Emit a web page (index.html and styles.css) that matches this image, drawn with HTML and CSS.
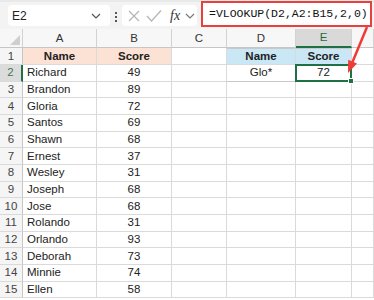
FILE: index.html
```html
<!DOCTYPE html>
<html>
<head>
    <title>VLOOKUP wildcard</title>
    <link rel="stylesheet" href="styles.css">
</head>
<body>
    <div class="topbar">
        <div class="namebox">
            <span>E2</span>
            <svg width="10" height="6" viewBox="0 0 10 6"><path d="M1 1 L5 5 L9 1" fill="none" stroke="#555" stroke-width="1.2"/></svg>
        </div>
        <div class="dots"><i></i><i></i><i></i></div>
        <div class="fxbox">
            <svg width="14" height="14" viewBox="0 0 14 14"><path d="M2 2 L12 12 M12 2 L2 12" stroke="#b5b5b5" stroke-width="1.2"/></svg>
            <svg width="16" height="14" viewBox="0 0 16 14"><path d="M1 7 L5.5 12 L15 1.5" fill="none" stroke="#b5b5b5" stroke-width="1.2"/></svg>
            <span class="fx">fx</span>
            <svg width="10" height="6" viewBox="0 0 10 6"><path d="M1 1 L5 5 L9 1" fill="none" stroke="#777" stroke-width="1.2"/></svg>
        </div>
        <div class="formula">=VLOOKUP(D2,A2:B15,2,0)</div>
    </div>

    <table class="sheet">
        <colgroup>
            <col class="c-row"><col class="c-a"><col class="c-b"><col class="c-c"><col class="c-d"><col class="c-e"><col class="c-f">
        </colgroup>
        <tr class="colhead">
            <td class="corner"><span class="tri"></span></td>
            <td>A</td><td>B</td><td>C</td><td>D</td><td class="active">E</td><td></td>
        </tr>
        <tr>
            <td class="rh">1</td>
            <td class="hd peach">Name</td><td class="hd peach">Score</td><td></td>
            <td class="hd blue">Name</td><td class="hd blue">Score</td><td></td>
        </tr>
        <tr>
            <td class="rh active">2</td>
            <td>Richard</td><td class="num">49</td><td></td>
            <td class="num lk">Glo*</td><td class="num lk sel">72<span class="handle"></span></td><td></td>
        </tr>
        <tr><td class="rh">3</td><td>Brandon</td><td class="num">89</td><td></td><td></td><td></td><td></td></tr>
        <tr><td class="rh">4</td><td>Gloria</td><td class="num">72</td><td></td><td></td><td></td><td></td></tr>
        <tr><td class="rh">5</td><td>Santos</td><td class="num">69</td><td></td><td></td><td></td><td></td></tr>
        <tr><td class="rh">6</td><td>Shawn</td><td class="num">68</td><td></td><td></td><td></td><td></td></tr>
        <tr><td class="rh">7</td><td>Ernest</td><td class="num">37</td><td></td><td></td><td></td><td></td></tr>
        <tr><td class="rh">8</td><td>Wesley</td><td class="num">31</td><td></td><td></td><td></td><td></td></tr>
        <tr><td class="rh">9</td><td>Joseph</td><td class="num">68</td><td></td><td></td><td></td><td></td></tr>
        <tr><td class="rh">10</td><td>Jose</td><td class="num">68</td><td></td><td></td><td></td><td></td></tr>
        <tr><td class="rh">11</td><td>Rolando</td><td class="num">31</td><td></td><td></td><td></td><td></td></tr>
        <tr><td class="rh">12</td><td>Orlando</td><td class="num">93</td><td></td><td></td><td></td><td></td></tr>
        <tr><td class="rh">13</td><td>Deborah</td><td class="num">73</td><td></td><td></td><td></td><td></td></tr>
        <tr><td class="rh">14</td><td>Minnie</td><td class="num">74</td><td></td><td></td><td></td><td></td></tr>
        <tr><td class="rh">15</td><td>Ellen</td><td class="num">58</td><td></td><td></td><td></td><td></td></tr>
    </table>

    <!-- callout arrow from the formula to the result cell -->
    <svg class="arrow" width="374" height="300" viewBox="0 0 374 300">
        <line x1="367" y1="27" x2="352.5" y2="62" stroke="#ee3b37" stroke-width="2.5"/>
        <polygon points="348,73 357,63.6 348.2,59.8" fill="#ee3b37"/>
    </svg>
</body>
</html>
```

FILE: styles.css
```css
body {
    margin: 0;
    width: 374px;
    height: 300px;
    overflow: hidden;
    position: relative;
    background: #fff;
    font-family: "Liberation Sans", Arial, sans-serif;
    color: #222;
}

.topbar {
    display: flex;
    align-items: flex-start;
    height: 29px;
    padding-left: 8px;
    background: #f3f3f3;
    box-sizing: border-box;
    border-top: 2px solid #e9e9e9;
}

.namebox {
    display: flex;
    align-items: center;
    justify-content: space-between;
    width: 102px;
    height: 21px;
    margin-top: 3px;
    padding: 0 9px 0 4px;
    box-sizing: border-box;
    background: #fff;
    border-radius: 4px;
    font-size: 12px;
    color: #222;
}

.dots {
    display: flex;
    flex-direction: column;
    gap: 2px;
    width: 12px;
    align-items: center;
    margin-top: 10px;
}

.dots i {
    display: block;
    width: 2px;
    height: 2px;
    background: #555;
}

.fxbox {
    display: flex;
    align-items: center;
    gap: 5px;
    width: 75px;
    height: 21px;
    margin-top: 3px;
    padding-left: 5px;
    box-sizing: border-box;
    background: #fff;
    border-radius: 4px;
}

.fx {
    font-family: "Liberation Serif", serif;
    font-style: italic;
    font-size: 14px;
    color: #333;
    margin-left: 3px;
}

.formula {
    width: 171px;
    height: 26px;
    margin-left: 4px;
    margin-top: -1px;
    box-sizing: border-box;
    border: 2px solid #e8403c;
    background: #fff;
    font-family: "Liberation Mono", monospace;
    font-size: 11.5px;
    line-height: 22px;
    padding-left: 6px;
    color: #111;
    white-space: nowrap;
}

.sheet {
    border-collapse: separate;
    border-spacing: 0;
    table-layout: fixed;
    width: 374px;
    font-size: 11.5px;
}

.c-row { width: 23px; }
.c-a { width: 74px; }
.c-b { width: 75px; }
.c-c { width: 55px; }
.c-d { width: 69px; }
.c-e { width: 56px; }
.c-f { width: 22px; }

.sheet td {
    height: 16.67px;
    padding: 0 0 0 4px;
    box-sizing: border-box;
    border-right: 1px solid #dadada;
    border-bottom: 1px solid #dadada;
    white-space: nowrap;
    overflow: visible;
    line-height: 15px;
}

.colhead td {
    height: 19px;
    background: #f7f7f7;
    text-align: center;
    padding: 0;
    color: #333;
    border-right-color: #d2d2d2;
    border-bottom-color: #c6c6c6;
}

.colhead td.active {
    background: #d9d9d9;
    color: #1e6e42;
    border-bottom: 2px solid #1e7145;
}

.corner {
    position: relative;
}

.tri {
    position: absolute;
    right: 2px;
    bottom: 2px;
    width: 0;
    height: 0;
    border-left: 10px solid transparent;
    border-bottom: 10px solid #cfcfcf;
}

.sheet td.rh {
    background: #f5f5f5;
    text-align: center;
    padding: 0;
    color: #444;
    border-right-color: #c6c6c6;
}

.sheet td.rh.active {
    background: #dcdcdc;
    color: #3f7a56;
    border-right: 2px solid #1e7145;
}

.num {
    text-align: center;
}

.sheet td.num {
    padding: 0;
}

.hd {
    font-weight: bold;
    text-align: center;
}

.sheet td.hd {
    padding: 0;
}

.peach {
    background: #fbe2d5;
}

.blue {
    background: #c9e7f5;
    border-top: 1px solid #c9c9c9;
}

.sheet td.blue:first-of-type,
.sheet td.lk:first-of-type {
    border-left: 1px solid #c9c9c9;
}

.sheet td.lk {
    border-bottom-color: #c9c9c9;
}

.sheet td.sel {
    position: relative;
}

.sel::after {
    content: "";
    position: absolute;
    left: -1px;
    top: -1px;
    right: -1px;
    bottom: -1px;
    border: 2px solid #1e7145;
}

.handle {
    position: absolute;
    right: -3px;
    bottom: -3px;
    width: 4px;
    height: 4px;
    background: #1e7145;
    border: 1px solid #fff;
    z-index: 2;
}

.arrow {
    position: absolute;
    left: 0;
    top: 0;
    pointer-events: none;
}
```
